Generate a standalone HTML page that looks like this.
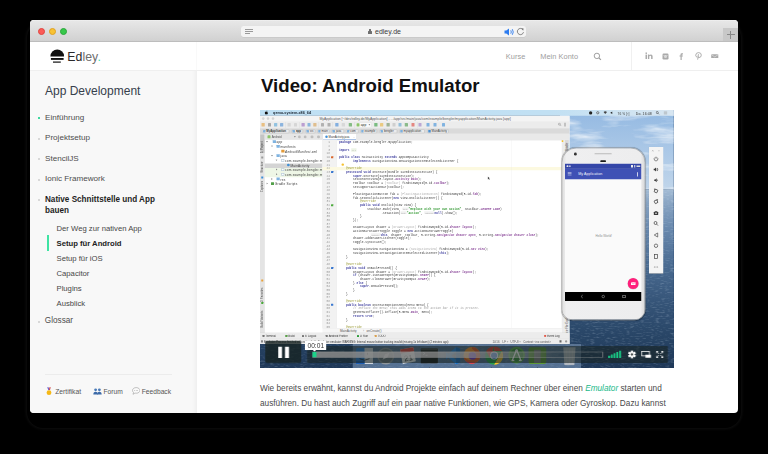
<!DOCTYPE html>
<html><head><meta charset="utf-8">
<style>
*{margin:0;padding:0;box-sizing:border-box}
html,body{width:768px;height:454px;overflow:hidden;background:#000}
body{position:relative;font-family:"Liberation Sans",sans-serif}
.a{position:absolute}
.t{white-space:nowrap;line-height:1}
#shadow{left:27px;top:22px;width:714px;height:406px;border-radius:16px;box-shadow:0 0 3px 1px rgba(255,255,255,0.06)}
#win{left:30px;top:20px;width:708px;height:393.4px;border-radius:4px;overflow:hidden;background:#fff}
#tb{left:0;top:0;width:708px;height:21.6px;background:linear-gradient(#e8e8e8,#d1d1d1);border-bottom:1px solid #bdbdbd;box-shadow:inset 0 0.6px 0 #f4f4f4}
.tl{width:7px;height:7px;border-radius:50%;top:7.6px}
#addr{left:211px;top:5.5px;width:285px;height:11.5px;border-radius:2.5px;background:#f4f4f4;box-shadow:0 0.5px 0.5px rgba(0,0,0,0.10)}
#plus{left:693px;top:8.3px;width:15px;height:13px;background:#c8c8c8}
#hdr{left:0;top:21.6px;width:708px;height:29.2px;background:#fff;border-bottom:1px solid #efefef}
#side{left:0;top:50.8px;width:166.5px;height:343px;background:#f8f8f8;box-shadow:inset -5px 0 5px -4px rgba(0,0,0,0.06)}
.cl{position:absolute;left:0;white-space:pre;font-family:"Liberation Mono",monospace;font-size:11.73px;line-height:1;color:#000}

</style></head>
<body>
<div id="shadow" class="a"></div>
<div id="win" class="a">
<div id="tb" class="a"><div class="a tl" style="left:7.9px;background:#fc5b57;border:0.5px solid #e0443f"></div><div class="a tl" style="left:18.9px;background:#f8c233;border:0.5px solid #dfa123"></div><div class="a tl" style="left:29.9px;background:#37c84a;border:0.5px solid #2aa83a"></div><div id="addr" class="a"><div class="a" style="left:4px;top:3.3px;width:8px;height:1px;background:#9a9a9a"></div><div class="a" style="left:4px;top:5.2px;width:8px;height:1px;background:#9a9a9a"></div><div class="a" style="left:4px;top:7.1px;width:5px;height:1px;background:#9a9a9a"></div></div><div class="a " style="left:338.20px;top:11.00px;width:3.60px;height:3.20px;background:#6f6f6f;border-radius:0.5px"></div>
<div class="a" style="left:338.9px;top:8.600000000000001px;width:2.3px;height:3.2px;border:0.8px solid #6f6f6f;border-bottom:none;border-radius:1.2px 1.2px 0 0"></div><div class="a t" style="left:345.00px;top:8.37px;font-size:7.0px;color:#3c3c3c;font-weight:normal;letter-spacing:0px">edley.de</div>
<svg class="a" style="left:473.5px;top:7.5px" width="12" height="8" viewBox="0 0 12 8"><path d="M0.5 2.5h1.8L5 0.6v6.8L2.3 5.5H0.5z" fill="#2d7cf0"/><path d="M6.8 2.3q1 1.7 0 3.4M8.3 1.2q1.9 2.8 0 5.6" stroke="#2d7cf0" stroke-width="0.9" fill="none"/></svg><svg class="a" style="left:485.5px;top:7.300000000000001px" width="9" height="9" viewBox="0 0 9 9"><path d="M6.9 2.6A3.1 3.1 0 1 0 7.5 5.2" stroke="#707070" stroke-width="0.85" fill="none"/><path d="M5.4 1.2L7.6 1.5 7.2 3.7z" fill="#707070"/></svg><div id="plus" class="a"><div class="a" style="left:3.5px;top:6px;width:8px;height:0.6px;background:#888"></div><div class="a" style="left:7.2px;top:2.3px;width:0.6px;height:8px;background:#888"></div></div></div><div id="hdr" class="a"></div><div class="a " style="left:165.60px;top:22.00px;width:0.70px;height:28.00px;background:#f9f9f9;"></div>
<svg class="a" style="left:20px;top:28.5px" width="14.5" height="14" viewBox="0 0 14.5 14"><path d="M0.4 7.4A6.85 6.85 0 0 1 14.1 7.4z" fill="#111"/><rect x="0.9" y="9.0" width="12.7" height="1.9" fill="#111"/><rect x="3.0" y="12.5" width="7.8" height="1.2" fill="#111"/></svg><div class="a t" style="left:37.30px;top:30.99px;font-size:12.3px;color:#333;font-weight:normal;letter-spacing:0.05px"><span style="color:#2a2a2a">Ed</span><span style="color:#6e6e6e">ley</span><span style="color:#3fe0a5">.</span></div>
<div class="a t" style="left:475.80px;top:32.74px;font-size:7.4px;color:#9d9d9d;font-weight:normal;letter-spacing:0.05px">Kurse</div>
<div class="a t" style="left:510.20px;top:32.74px;font-size:7.4px;color:#9d9d9d;font-weight:normal;letter-spacing:0.05px">Mein Konto</div>
<svg class="a" style="left:563px;top:31.5px" width="9" height="9" viewBox="0 0 9 9"><circle cx="3.9" cy="3.9" r="2.7" stroke="#9a9a9a" stroke-width="0.95" fill="none"/><path d="M5.9 5.9L7.9 7.9" stroke="#9a9a9a" stroke-width="1.1"/></svg><div class="a " style="left:601.20px;top:21.50px;width:0.80px;height:28.00px;background:#f0f0f0;"></div>
<svg class="a" style="left:614.5px;top:32.3px" width="8" height="7.5" viewBox="0 0 8 7.5"><rect x="0.5" y="0.5" width="1.5" height="1.4" fill="#aaaaaa"/><rect x="0.5" y="2.6" width="1.5" height="4.4" fill="#aaaaaa"/><path d="M2.9 2.6h1.4v0.7q0.6-0.9 1.7-0.9 1.6 0 1.6 1.9V7H6.1V4.6q0-0.9-0.8-0.9-1 0-1 1.1V7H2.9z" fill="#aaaaaa"/></svg><svg class="a" style="left:631.5px;top:32.5px" width="7" height="7" viewBox="0 0 7 7"><rect x="0.5" y="0.5" width="6" height="6" rx="1.2" fill="#aaaaaa"/><circle cx="3.5" cy="3.6" r="1.5" fill="#fff" fill-opacity="0.55"/><rect x="0.9" y="2.3" width="5.2" height="0.5" fill="#fff" fill-opacity="0.5"/></svg><svg class="a" style="left:649px;top:32.5px" width="5" height="7" viewBox="0 0 5 7"><path d="M1.5 7V3.6H0.5V2.5h1V1.6Q1.5 0.3 2.8 0.3H4v1.1H3.2q-0.5 0-0.5 0.5v0.6H4L3.8 3.6H2.7V7z" fill="#aaaaaa"/></svg><svg class="a" style="left:664.5px;top:32px" width="7" height="8" viewBox="0 0 7 8"><path d="M2.6 7.6L3.4 4.4M2.3 5.3Q0.6 4.7 0.7 3.2 0.9 0.6 3.6 0.6 6.3 0.7 6.3 3.1 6.2 5.5 4.0 5.6 2.9 5.5 3.0 4.4L3.5 2.2" stroke="#aaaaaa" stroke-width="0.95" fill="none"/></svg><svg class="a" style="left:681px;top:33.6px" width="7.5" height="4.8" viewBox="0 0 7.5 4.8"><rect x="0.2" y="0.2" width="7.1" height="4.4" rx="0.4" fill="#aaaaaa"/><path d="M0.3 0.6L3.75 2.9 7.2 0.6" stroke="#fff" stroke-width="0.6" stroke-opacity="0.8" fill="none"/></svg><div id="side" class="a"></div><div class="a t" style="left:15.00px;top:64.64px;font-size:12.0px;color:#36404c;font-weight:normal;">App Development</div>
<div class="a t" style="left:15.00px;top:93.54px;font-size:8.1px;color:#4d4d4d;font-weight:normal;">Einführung</div>
<div class="a " style="left:8.10px;top:97.10px;width:1.90px;height:1.90px;background:#3fd9a0;"></div>
<div class="a t" style="left:15.00px;top:114.14px;font-size:8.1px;color:#4d4d4d;font-weight:normal;">Projektsetup</div>
<div class="a " style="left:8.10px;top:117.70px;width:1.90px;height:1.90px;background:#d8d8d8;"></div>
<div class="a t" style="left:15.00px;top:134.54px;font-size:8.1px;color:#4d4d4d;font-weight:normal;">StencilJS</div>
<div class="a " style="left:8.10px;top:138.10px;width:1.90px;height:1.90px;background:#d8d8d8;"></div>
<div class="a t" style="left:15.00px;top:155.34px;font-size:8.1px;color:#4d4d4d;font-weight:normal;">Ionic Framework</div>
<div class="a " style="left:8.10px;top:158.90px;width:1.90px;height:1.90px;background:#d8d8d8;"></div>
<div class="a t" style="left:15.00px;top:175.80px;font-size:8.15px;color:#1e1e1e;font-weight:bold;">Native Schnittstelle und App</div>
<div class="a t" style="left:15.00px;top:187.20px;font-size:8.15px;color:#1e1e1e;font-weight:bold;">bauen</div>
<div class="a " style="left:8.10px;top:179.40px;width:1.90px;height:1.90px;background:#d8d8d8;"></div>
<div class="a t" style="left:26.50px;top:205.48px;font-size:7.7px;color:#474747;font-weight:normal;">Der Weg zur nativen App</div>
<div class="a t" style="left:26.50px;top:219.98px;font-size:7.7px;color:#222;font-weight:bold;">Setup für Android</div>
<div class="a t" style="left:26.50px;top:234.68px;font-size:7.7px;color:#474747;font-weight:normal;">Setup für iOS</div>
<div class="a t" style="left:26.50px;top:250.08px;font-size:7.7px;color:#474747;font-weight:normal;">Capacitor</div>
<div class="a t" style="left:26.50px;top:264.88px;font-size:7.7px;color:#474747;font-weight:normal;">Plugins</div>
<div class="a t" style="left:26.50px;top:279.78px;font-size:7.7px;color:#474747;font-weight:normal;">Ausblick</div>
<div class="a " style="left:17.20px;top:215.40px;width:2.20px;height:15.40px;background:#3fe3a3;"></div>
<div class="a t" style="left:14.80px;top:297.06px;font-size:8.2px;color:#4d4d4d;font-weight:normal;">Glossar</div>
<div class="a " style="left:8.10px;top:300.70px;width:1.90px;height:1.90px;background:#d8d8d8;"></div>
<div class="a " style="left:15.00px;top:354.20px;width:126.50px;height:0.70px;background:#ececec;"></div>
<div class="a t" style="left:25.20px;top:368.69px;font-size:6.75px;color:#555;font-weight:normal;">Zertifikat</div>
<div class="a t" style="left:73.50px;top:368.77px;font-size:6.65px;color:#555;font-weight:normal;">Forum</div>
<div class="a t" style="left:111.80px;top:368.75px;font-size:6.67px;color:#555;font-weight:normal;">Feedback</div>
<svg class="a" style="left:16px;top:366.5px" width="6" height="9" viewBox="0 0 6 9"><path d="M1.2 0.3h1.4l0.8 2.4-1 0.6z" fill="#6a5acd"/><path d="M3.4 0.3h1.4L3.9 3.3 2.9 2.7z" fill="#d04a4a"/><circle cx="3" cy="5.7" r="2.4" fill="#f5b816"/></svg><svg class="a" style="left:62.8px;top:367.5px" width="9" height="7" viewBox="0 0 9 7"><circle cx="2.6" cy="1.8" r="1.4" fill="#4a7ab8"/><circle cx="6.4" cy="1.8" r="1.4" fill="#4a7ab8"/><path d="M0.3 6.6q0-2.9 2.3-2.9t2.3 2.9z" fill="#3c6aa8"/><path d="M4.1 6.6q0-2.9 2.3-2.9t2.3 2.9z" fill="#3c6aa8"/></svg><svg class="a" style="left:101.5px;top:367.0px" width="8.5" height="8" viewBox="0 0 8.5 8"><path d="M4.2 0.6C6.3 0.6 7.9 1.8 7.9 3.4S6.3 6.2 4.2 6.2q-0.6 0-1.2-0.2L1 7.3 1.5 5.5Q0.5 4.6 0.5 3.4C0.5 1.8 2.1 0.6 4.2 0.6z" fill="#fafafa" stroke="#9a9a9a" stroke-width="0.6"/><circle cx="2.7" cy="3.4" r="0.45" fill="#888"/><circle cx="4.2" cy="3.4" r="0.45" fill="#888"/><circle cx="5.7" cy="3.4" r="0.45" fill="#888"/></svg><div class="a t" style="left:231.00px;top:57.01px;font-size:18.65px;color:#111;font-weight:bold;">Video: Android Emulator</div>
<div id="video" class="a" style="left:230.0px;top:90.0px;width:413.7px;height:258.3px;overflow:hidden;background:#1f3b5c"><div class="a" style="left:0;top:0;width:1655px;height:1033px;transform:scale(0.25);transform-origin:0 0"><div class="a" style="left:1200.0px;top:0.0px;width:454.8px;height:318.0px;background:linear-gradient(180deg,#93b9e2 0%,#a8c6e6 45%,#c0d5ea 100%);"></div>
<svg class="a" style="left:1200.0px;top:0.0px" width="456" height="320"><filter id="cl" x="0" y="0" width="100%" height="100%"><feTurbulence type="fractalNoise" baseFrequency="0.006 0.03" numOctaves="4" seed="7"/><feColorMatrix type="matrix" values="0 0 0 0 1  0 0 0 0 1  0 0 0 0 1  0 0 0 2.2 -1.05"/></filter><rect width="100%" height="100%" filter="url(#cl)" opacity="0.8"/></svg>
<div class="a" style="left:0.0px;top:318.0px;width:1654.8px;height:715.2px;background:linear-gradient(180deg,#a4bcd5 0%,#87a3c2 8%,#6888ad 22%,#4a6b91 42%,#365579 62%,#284566 82%,#1f3858 100%);"></div>
<svg class="a" style="left:0.0px;top:318.0px" width="1656" height="716"><filter id="sea" x="0" y="0" width="100%" height="100%"><feTurbulence type="fractalNoise" baseFrequency="0.05 0.2" numOctaves="2" seed="4"/><feColorMatrix type="matrix" values="0 0 0 0 0.75  0 0 0 0 0.85  0 0 0 0 0.95  0 0 0 2.5 -1.25"/></filter><rect width="100%" height="100%" filter="url(#sea)" opacity="0.22"/></svg>
<div class="a" style="left:0.0px;top:0.0px;width:1654.8px;height:22.8px;background:linear-gradient(90deg,#bfe0f4 0%,#c1e0f3 70%,#d8e6f1 100%);"></div>
<svg class="a" style="left:18.4px;top:1.2px" width="16" height="18" viewBox="0 0 16 18"><path d="M11 1q0 2-2 3.2Q8 4.6 7.6 4.3 7.7 2 10.9 1zM13.6 12.6q-0.8 2-2 3.4-0.9 1-1.8 1-0.7 0-1.6-0.4-0.8-0.4-1.6 0-1 0.4-1.6 0.4-1 0-2-1.3Q1 13.2 1 10.3q0-2.6 1.5-3.9 1-0.9 2.4-0.9 0.8 0 1.8 0.4 0.7 0.3 1 0.3 0.3 0 1.2-0.4 1-0.4 1.8-0.3 2 0.2 3 1.6-1.8 1.1-1.7 3.1 0.1 1.6 1.6 2.4z" fill="#111"/></svg>
<div class="a t" style="left:52.4px;top:1.7px;font-size:15px;color:#1a2430;font-weight:bold;letter-spacing:0px">qemu-system-x86_64</div>
<div class="a" style="left:1316.4px;top:4.8px;width:12.8px;height:12.8px;border-radius:50%;background:#222;"></div>
<div class="a" style="left:1345.2px;top:5.2px;width:12.0px;height:12.0px;border-radius:50%;background:none;border:3px solid #555;box-sizing:border-box"></div>
<svg class="a" style="left:1373.2px;top:4.0px" width="16" height="13" viewBox="0 0 16 13"><path d="M8 12L1 4Q8 -1.5 15 4z" fill="#444"/></svg>
<svg class="a" style="left:1401.2px;top:4.8px" width="12" height="12" viewBox="0 0 12 12"><path d="M1 4h3l4-3.5v11L4 8H1z" fill="#222"/></svg>
<div class="a t" style="left:1430.0px;top:7.4px;font-size:13px;color:#444;font-weight:normal;letter-spacing:0.3px">76 % [<b>▪</b>]</div>
<div class="a t" style="left:1503.2px;top:6.5px;font-size:14px;color:#333;font-weight:normal;letter-spacing:0.4px">Do. 16:48</div>
<svg class="a" style="left:1583.2px;top:4.0px" width="16" height="16" viewBox="0 0 16 16"><circle cx="6" cy="6" r="4.2" stroke="#333" stroke-width="2" fill="none"/><path d="M9 9l4.5 4.5" stroke="#333" stroke-width="2.2"/></svg>
<svg class="a" style="left:1614.4px;top:4.8px" width="16" height="14" viewBox="0 0 16 14"><path d="M1 2h14M1 6.5h14M1 11h14" stroke="#999" stroke-width="2"/></svg>
<div class="a" style="left:0.0px;top:22.8px;width:1238.4px;height:913.2px;background:#ffffff;"></div>
<div class="a" style="left:0.0px;top:22.8px;width:1238.4px;height:22.0px;background:#f4f4f4;"></div>
<div class="a" style="left:7.8px;top:29.0px;width:10.0px;height:10.0px;border-radius:50%;background:#d6d6d6;border:1px solid #c4c4c4;box-sizing:border-box"></div>
<div class="a" style="left:27.4px;top:29.0px;width:10.0px;height:10.0px;border-radius:50%;background:#d6d6d6;border:1px solid #c4c4c4;box-sizing:border-box"></div>
<div class="a" style="left:47.4px;top:29.0px;width:10.0px;height:10.0px;border-radius:50%;background:#d6d6d6;border:1px solid #c4c4c4;box-sizing:border-box"></div>
<div class="a t" style="left:238.0px;top:28.5px;font-size:13.6px;color:#555;font-weight:normal;letter-spacing:0px">MyApplication [~/dev/edley.de/MyApplication] - .../app/src/main/java/com/example/bengler/myapplication/MainActivity.java [app]</div>
<div class="a" style="left:0.0px;top:44.8px;width:1238.4px;height:28.0px;background:#ececec;"></div>
<div class="a" style="left:6.4px;top:52.0px;width:12.8px;height:13.6px;background:#e6a23c;border-radius:2px;opacity:0.6"></div>
<div class="a" style="left:31.6px;top:52.0px;width:12.8px;height:13.6px;background:#7c7c7c;border-radius:2px;opacity:0.6"></div>
<div class="a" style="left:56.0px;top:52.0px;width:12.8px;height:13.6px;background:#55a7d8;border-radius:2px;opacity:0.6"></div>
<div class="a" style="left:80.4px;top:52.0px;width:12.8px;height:13.6px;background:#4c8fd6;border-radius:2px;opacity:0.6"></div>
<div class="a" style="left:110.4px;top:52.0px;width:12.8px;height:13.6px;background:#c8c8c8;border-radius:2px;opacity:0.6"></div>
<div class="a" style="left:135.6px;top:52.0px;width:12.8px;height:13.6px;background:#c8c8c8;border-radius:2px;opacity:0.6"></div>
<div class="a" style="left:166.4px;top:52.0px;width:12.8px;height:13.6px;background:#9b6bbf;border-radius:2px;opacity:0.6"></div>
<div class="a" style="left:189.6px;top:52.0px;width:12.8px;height:13.6px;background:#4b95d6;border-radius:2px;opacity:0.6"></div>
<div class="a" style="left:213.2px;top:52.0px;width:12.8px;height:13.6px;background:#d9a050;border-radius:2px;opacity:0.6"></div>
<div class="a" style="left:243.6px;top:52.0px;width:12.8px;height:13.6px;background:#8a8a8a;border-radius:2px;opacity:0.6"></div>
<div class="a" style="left:269.6px;top:52.0px;width:12.8px;height:13.6px;background:#8a8a8a;border-radius:2px;opacity:0.6"></div>
<div class="a" style="left:300.8px;top:52.0px;width:12.8px;height:13.6px;background:#3d87d8;border-radius:2px;opacity:0.6"></div>
<div class="a" style="left:326.8px;top:52.0px;width:12.8px;height:13.6px;background:#cccccc;border-radius:2px;opacity:0.6"></div>
<div class="a" style="left:355.2px;top:52.0px;width:12.8px;height:13.6px;background:#3f9d3f;border-radius:2px;opacity:0.6"></div>
<div class="a" style="left:456.8px;top:52.0px;width:12.8px;height:13.6px;background:#2e9c3a;border-radius:2px;opacity:0.6"></div>
<div class="a" style="left:480.4px;top:52.0px;width:12.8px;height:13.6px;background:#e9b43a;border-radius:2px;opacity:0.6"></div>
<div class="a" style="left:506.4px;top:52.0px;width:12.8px;height:13.6px;background:#6b8e5b;border-radius:2px;opacity:0.6"></div>
<div class="a" style="left:529.6px;top:52.0px;width:12.8px;height:13.6px;background:#bcbcbc;border-radius:2px;opacity:0.6"></div>
<div class="a" style="left:553.6px;top:52.0px;width:12.8px;height:13.6px;background:#5aa2d0;border-radius:2px;opacity:0.6"></div>
<div class="a" style="left:579.2px;top:52.0px;width:12.8px;height:13.6px;background:#4a9a4a;border-radius:2px;opacity:0.6"></div>
<div class="a" style="left:605.6px;top:52.0px;width:12.8px;height:13.6px;background:#e0443a;border-radius:2px;opacity:0.6"></div>
<div class="a" style="left:633.6px;top:52.0px;width:12.8px;height:13.6px;background:#9a7cc4;border-radius:2px;opacity:0.6"></div>
<div class="a" style="left:665.6px;top:52.0px;width:12.8px;height:13.6px;background:#3b8ed8;border-radius:2px;opacity:0.6"></div>
<div class="a" style="left:693.6px;top:52.0px;width:12.8px;height:13.6px;background:#3b8ed8;border-radius:2px;opacity:0.6"></div>
<div class="a" style="left:727.6px;top:52.0px;width:12.8px;height:13.6px;background:#3b8ed8;border-radius:2px;opacity:0.6"></div>
<div class="a" style="left:101.2px;top:48.0px;width:1.2px;height:24.0px;background:#d0d0d0;"></div>
<div class="a" style="left:157.6px;top:48.0px;width:1.2px;height:24.0px;background:#d0d0d0;"></div>
<div class="a" style="left:234.0px;top:48.0px;width:1.2px;height:24.0px;background:#d0d0d0;"></div>
<div class="a" style="left:290.0px;top:48.0px;width:1.2px;height:24.0px;background:#d0d0d0;"></div>
<div class="a" style="left:376.0px;top:48.0px;width:1.2px;height:24.0px;background:#d0d0d0;"></div>
<div class="a" style="left:628.0px;top:48.0px;width:1.2px;height:24.0px;background:#d0d0d0;"></div>
<div class="a" style="left:380.8px;top:48.8px;width:64.4px;height:21.6px;background:#fafafa;border:1px solid #cfcfcf;border-radius:4px"></div>
<div class="a" style="left:386.4px;top:53.2px;width:11.2px;height:12.8px;background:#8cc46a;border-radius:2px"></div>
<div class="a t" style="left:403.2px;top:54.2px;font-size:13px;color:#222;font-weight:normal;">app</div>
<svg class="a" style="left:433.2px;top:55.6px" width="9" height="7" viewBox="0 0 9 7"><path d="M1 1h7L4.5 6z" fill="#666"/></svg>
<div class="a" style="left:0.0px;top:72.8px;width:1238.4px;height:22.4px;background:#dadada;"></div>
<div class="a" style="left:0.0px;top:94.4px;width:1238.4px;height:0.8px;background:#cfcfcf;"></div>
<div class="a" style="left:8.0px;top:76.8px;width:108.8px;height:16.4px;background:#ececec;border:2.5px solid #bdbdbd;border-radius:4px"></div>
<div class="a" style="left:12.0px;top:80.0px;width:9.6px;height:9.6px;background:#7fb0dc;border-radius:1px"></div>
<div class="a t" style="left:25.2px;top:79.5px;font-size:11.5px;color:#333;font-weight:bold;">MyApplication</div>
<div class="a" style="left:126.4px;top:76.8px;width:45.6px;height:16.4px;background:#ececec;border:2.5px solid #bdbdbd;border-radius:4px"></div>
<div class="a" style="left:130.4px;top:80.0px;width:9.6px;height:9.6px;background:#7fb0dc;border-radius:1px"></div>
<div class="a t" style="left:143.6px;top:79.5px;font-size:11.5px;color:#333;font-weight:bold;">app</div>
<div class="a" style="left:182.0px;top:76.8px;width:39.2px;height:16.4px;background:#ececec;border:2.5px solid #bdbdbd;border-radius:4px"></div>
<div class="a" style="left:186.0px;top:80.0px;width:9.6px;height:9.6px;background:#7fb0dc;border-radius:1px"></div>
<div class="a t" style="left:199.2px;top:79.5px;font-size:11.5px;color:#333;font-weight:normal;">src</div>
<div class="a" style="left:228.8px;top:76.8px;width:49.6px;height:16.4px;background:#ececec;border:2.5px solid #bdbdbd;border-radius:4px"></div>
<div class="a" style="left:232.8px;top:80.0px;width:9.6px;height:9.6px;background:#7fb0dc;border-radius:1px"></div>
<div class="a t" style="left:246.0px;top:79.5px;font-size:11.5px;color:#333;font-weight:normal;">main</div>
<div class="a" style="left:286.4px;top:76.8px;width:49.6px;height:16.4px;background:#ececec;border:2.5px solid #bdbdbd;border-radius:4px"></div>
<div class="a" style="left:290.4px;top:80.0px;width:9.6px;height:9.6px;background:#7fb0dc;border-radius:1px"></div>
<div class="a t" style="left:303.6px;top:79.5px;font-size:11.5px;color:#333;font-weight:normal;">java</div>
<div class="a" style="left:343.6px;top:76.8px;width:50.4px;height:16.4px;background:#ececec;border:2.5px solid #bdbdbd;border-radius:4px"></div>
<div class="a" style="left:347.6px;top:80.0px;width:9.6px;height:9.6px;background:#7fb0dc;border-radius:1px"></div>
<div class="a t" style="left:360.8px;top:79.5px;font-size:11.5px;color:#333;font-weight:normal;">com</div>
<div class="a" style="left:400.8px;top:76.8px;width:67.6px;height:16.4px;background:#ececec;border:2.5px solid #bdbdbd;border-radius:4px"></div>
<div class="a" style="left:404.8px;top:80.0px;width:9.6px;height:9.6px;background:#7fb0dc;border-radius:1px"></div>
<div class="a t" style="left:418.0px;top:79.5px;font-size:11.5px;color:#333;font-weight:normal;">example</div>
<div class="a" style="left:478.8px;top:76.8px;width:70.4px;height:16.4px;background:#ececec;border:2.5px solid #bdbdbd;border-radius:4px"></div>
<div class="a" style="left:482.8px;top:80.0px;width:9.6px;height:9.6px;background:#7fb0dc;border-radius:1px"></div>
<div class="a t" style="left:496.0px;top:79.5px;font-size:11.5px;color:#333;font-weight:normal;">bengler</div>
<div class="a" style="left:557.2px;top:76.8px;width:101.6px;height:16.4px;background:#ececec;border:2.5px solid #bdbdbd;border-radius:4px"></div>
<div class="a" style="left:561.2px;top:80.0px;width:9.6px;height:9.6px;background:#7fb0dc;border-radius:1px"></div>
<div class="a t" style="left:574.4px;top:79.5px;font-size:11.5px;color:#333;font-weight:normal;">myapplication</div>
<div class="a" style="left:669.2px;top:76.8px;width:86.0px;height:16.4px;background:#ececec;border:2.5px solid #bdbdbd;border-radius:4px"></div>
<div class="a" style="left:673.2px;top:80.0px;width:9.6px;height:9.6px;background:#4a90d0;border-radius:1px"></div>
<div class="a t" style="left:686.4px;top:79.5px;font-size:11.5px;color:#333;font-weight:normal;">MainActivity</div>
<div class="a" style="left:0.0px;top:95.2px;width:18.4px;height:820.8px;background:#e4e4e4;"></div>
<div class="a" style="left:17.6px;top:95.2px;width:1.2px;height:820.8px;background:#cccccc;"></div>
<div class="a" style="left:0.8px;top:98.0px;width:16.8px;height:74.0px;background:#c4c4c4;"></div>
<div class="a" style="left:5.2px;top:186.0px;width:8.0px;height:8.0px;background:#999;border-radius:1px"></div>
<div class="a" style="left:5.2px;top:266.0px;width:8.0px;height:8.0px;background:#3b8ed8;border-radius:1px"></div>
<div class="a" style="left:5.2px;top:678.0px;width:8.0px;height:8.0px;background:#e9a23a;border-radius:1px"></div>
<div class="a" style="left:5.2px;top:768.0px;width:8.0px;height:8.0px;background:#4caa3c;border-radius:1px"></div>
<div class="a t" style="left:2.4px;top:172.0px;font-size:11px;color:#444;transform:rotate(-90deg);transform-origin:0 0">1: Project</div>
<div class="a t" style="left:2.4px;top:251.0px;font-size:11px;color:#444;transform:rotate(-90deg);transform-origin:0 0">Structure</div>
<div class="a t" style="left:2.4px;top:328.0px;font-size:11px;color:#444;transform:rotate(-90deg);transform-origin:0 0">Captures</div>
<div class="a t" style="left:2.4px;top:768.0px;font-size:11px;color:#444;transform:rotate(-90deg);transform-origin:0 0">2: Favorites</div>
<div class="a t" style="left:2.4px;top:870.0px;font-size:11px;color:#444;transform:rotate(-90deg);transform-origin:0 0">Build Variants</div>
<div class="a" style="left:18.8px;top:95.2px;width:230.8px;height:23.2px;background:#e6e6e6;"></div>
<div class="a" style="left:18.8px;top:117.6px;width:230.8px;height:0.8px;background:#cfcfcf;"></div>
<div class="a" style="left:30.4px;top:101.2px;width:11.2px;height:11.6px;background:#8cc46a;border-radius:3px 3px 1px 1px"></div>
<div class="a t" style="left:46.8px;top:103.5px;font-size:11.5px;color:#555;font-weight:normal;">Android</div>
<svg class="a" style="left:135.2px;top:104.0px" width="9" height="7" viewBox="0 0 9 7"><path d="M1 1h7L4.5 6z" fill="#666"/></svg>
<div class="a" style="left:152.0px;top:101.6px;width:11.2px;height:11.2px;border-radius:50%;background:#bdbdbd;"></div>
<div class="a" style="left:174.8px;top:101.6px;width:11.2px;height:11.2px;border-radius:50%;background:#bdbdbd;"></div>
<div class="a" style="left:202.4px;top:101.6px;width:11.2px;height:11.2px;border-radius:50%;background:#bdbdbd;"></div>
<div class="a" style="left:228.4px;top:101.6px;width:11.2px;height:11.2px;border-radius:50%;background:#bdbdbd;"></div>
<div class="a" style="left:18.8px;top:213.6px;width:230.0px;height:18.4px;background:#d4d4d4;"></div>
<div class="a" style="left:18.8px;top:232.0px;width:230.0px;height:37.2px;background:#eef6e6;"></div>
<div class="a" style="left:18.8px;top:118.4px;width:230.0px;height:753.6px;overflow:hidden"><div class="a" style="left:-18.8px;top:-118.4px;width:1655px;height:1033px">
<svg class="a" style="left:23.2px;top:122.8px" width="10" height="8" viewBox="0 0 10 8"><path d="M1 1h8L5 7z" fill="#8a8a8a"/></svg>
<div class="a" style="left:50.8px;top:121.2px;width:12.8px;height:11.2px;background:#7fb3e0;border-radius:1px"></div>
<div class="a t" style="left:66.4px;top:122.6px;font-size:12.5px;color:#3a3a3a;font-weight:normal;letter-spacing:0.8px">app</div>
<svg class="a" style="left:42.8px;top:141.4px" width="10" height="8" viewBox="0 0 10 8"><path d="M1 1h8L5 7z" fill="#8a8a8a"/></svg>
<div class="a" style="left:66.4px;top:139.8px;width:12.8px;height:11.2px;background:#7fb3e0;border-radius:1px"></div>
<div class="a t" style="left:82.0px;top:141.3px;font-size:12.5px;color:#3a3a3a;font-weight:normal;letter-spacing:0.8px">manifests</div>
<div class="a" style="left:84.8px;top:158.5px;width:12.8px;height:11.2px;background:#e39b3a;border-radius:1px"></div>
<div class="a t" style="left:100.4px;top:159.9px;font-size:12.5px;color:#3a3a3a;font-weight:normal;font-style:italic;letter-spacing:0.8px">AndroidManifest.xml</div>
<svg class="a" style="left:42.8px;top:178.7px" width="10" height="8" viewBox="0 0 10 8"><path d="M1 1h8L5 7z" fill="#8a8a8a"/></svg>
<div class="a" style="left:66.4px;top:177.1px;width:12.8px;height:11.2px;background:#7fb3e0;border-radius:1px"></div>
<div class="a t" style="left:82.0px;top:178.5px;font-size:12.5px;color:#3a3a3a;font-weight:normal;letter-spacing:0.8px">java</div>
<svg class="a" style="left:61.2px;top:197.4px" width="10" height="8" viewBox="0 0 10 8"><path d="M1 1h8L5 7z" fill="#8a8a8a"/></svg>
<div class="a" style="left:85.2px;top:196.2px;width:12.0px;height:10.4px;background:#fff;border:2px solid #9fb8cf;border-radius:1px"></div>
<div class="a t" style="left:100.4px;top:197.2px;font-size:12.5px;color:#3a3a3a;font-weight:normal;letter-spacing:0.8px">com.example.bengler.myapplication</div>
<div class="a" style="left:107.8px;top:214.6px;width:10.8px;height:10.8px;border-radius:50%;background:#3f8fd6;"></div>
<div class="a t" style="left:122.0px;top:215.8px;font-size:12.5px;color:#3a3a3a;font-weight:normal;letter-spacing:0.8px">MainActivity</div>
<svg class="a" style="left:62.8px;top:233.4px" width="8" height="10" viewBox="0 0 8 10"><path d="M1 1v8l6-4z" fill="#8a8a8a"/></svg>
<div class="a" style="left:85.2px;top:233.4px;width:12.0px;height:10.4px;background:#fff;border:2px solid #9fb8cf;border-radius:1px"></div>
<div class="a t" style="left:100.4px;top:234.5px;font-size:12.5px;color:#3a3a3a;font-weight:normal;letter-spacing:0.8px">com.example.bengler.myapplication (androidTest)</div>
<svg class="a" style="left:62.8px;top:252.1px" width="8" height="10" viewBox="0 0 8 10"><path d="M1 1v8l6-4z" fill="#8a8a8a"/></svg>
<div class="a" style="left:85.2px;top:252.1px;width:12.0px;height:10.4px;background:#fff;border:2px solid #9fb8cf;border-radius:1px"></div>
<div class="a t" style="left:100.4px;top:253.1px;font-size:12.5px;color:#3a3a3a;font-weight:normal;letter-spacing:0.8px">com.example.bengler.myapplication (test)</div>
<svg class="a" style="left:44.4px;top:270.7px" width="8" height="10" viewBox="0 0 8 10"><path d="M1 1v8l6-4z" fill="#8a8a8a"/></svg>
<div class="a" style="left:66.4px;top:270.3px;width:12.8px;height:11.2px;background:#7fb3e0;border-radius:1px"></div>
<div class="a t" style="left:82.0px;top:271.7px;font-size:12.5px;color:#3a3a3a;font-weight:normal;letter-spacing:0.8px">res</div>
<svg class="a" style="left:24.8px;top:289.4px" width="8" height="10" viewBox="0 0 8 10"><path d="M1 1v8l6-4z" fill="#8a8a8a"/></svg>
<div class="a" style="left:43.6px;top:289.0px;width:12.8px;height:11.2px;background:#52a04a;border-radius:1px"></div>
<div class="a t" style="left:59.2px;top:290.4px;font-size:12.5px;color:#3a3a3a;font-weight:normal;letter-spacing:0.8px">Gradle Scripts</div>
</div></div>
<div class="a" style="left:249.6px;top:95.2px;width:988.8px;height:25.6px;background:#e9e9e9;"></div>
<div class="a" style="left:249.6px;top:120.0px;width:988.8px;height:0.8px;background:#d8d8d8;"></div>
<div class="a" style="left:251.6px;top:96.0px;width:132.4px;height:22.0px;background:#ffffff;"></div>
<div class="a" style="left:251.6px;top:116.4px;width:132.4px;height:1.6px;background:#5a8fd8;"></div>
<div class="a" style="left:260.6px;top:102.2px;width:10.0px;height:10.0px;border-radius:50%;background:#3f8fd6;"></div>
<div class="a t" style="left:274.4px;top:103.2px;font-size:11.3px;color:#333;font-weight:normal;">MainActivity.java</div>
<div class="a t" style="left:372.8px;top:103.5px;font-size:10px;color:#aaa;font-weight:normal;">×</div>
<svg class="a" style="left:1191.2px;top:50.4px" width="16" height="16" viewBox="0 0 16 16"><circle cx="6.5" cy="6.5" r="4" stroke="#777" stroke-width="1.6" fill="none"/><path d="M9.5 9.5l4 4" stroke="#777" stroke-width="1.8"/></svg>
<div class="a" style="left:1216.0px;top:51.2px;width:1.6px;height:14.4px;background:#999;"></div>
<div class="a" style="left:1222.4px;top:51.2px;width:1.6px;height:14.4px;background:#999;"></div>
<div class="a" style="left:248.8px;top:95.2px;width:1.2px;height:777.6px;background:#cfcfcf;"></div>
<div class="a" style="left:250.0px;top:118.4px;width:58.0px;height:753.6px;background:#f2f2f2;"></div>
<div class="a" style="left:307.2px;top:118.4px;width:0.8px;height:753.6px;background:#e8e8e8;"></div>
<div class="a" style="left:308.0px;top:227.9px;width:900.0px;height:13.2px;background:#fcf9e0;"></div>
<div class="a" style="left:250.0px;top:227.9px;width:58.0px;height:13.2px;background:#fcf9e0;"></div>
<div class="a" style="left:1004.0px;top:118.4px;width:1.0px;height:753.6px;background:#e6e6e6;"></div>
<div class="a" style="left:1208.0px;top:118.4px;width:30.4px;height:817.6px;background:#ececec;"></div>
<div class="a" style="left:1207.2px;top:118.4px;width:0.8px;height:817.6px;background:#d3d3d3;"></div>
<div class="a" style="left:1206.4px;top:120.8px;width:6.4px;height:6.8px;background:#f2c02c;"></div>
<div class="a" style="left:1220.0px;top:120.0px;width:15.2px;height:52.0px;background:#dadada;"></div>
<div class="a t" style="left:1220.8px;top:164.0px;font-size:11px;color:#444;transform:rotate(-90deg);transform-origin:0 0">Gradle</div>
<div class="a t" style="left:1220.8px;top:912.0px;font-size:11px;color:#444;transform:rotate(-90deg);transform-origin:0 0">Device File Explorer</div>
<div class="a" style="left:316.0px;top:0;width:892.0px;height:872.0px;overflow:hidden;opacity:0.8"><div class="cl" style="top:125.1px"><span style="font-weight:bold;color:#000080">package</span> com.example.bengler.myapplication;</div><div class="cl" style="top:139.8px"></div><div class="cl" style="top:154.6px"><span style="font-weight:bold;color:#000080">import</span> <span style="background:#e8f0e0;color:#555">...</span></div><div class="cl" style="top:169.4px"></div><div class="cl" style="top:184.1px"><span style="font-weight:bold;color:#000080">public class</span> MainActivity <span style="font-weight:bold;color:#000080">extends</span> AppCompatActivity</div><div class="cl" style="top:198.9px">        <span style="font-weight:bold;color:#000080">implements</span> NavigationView.OnNavigationItemSelectedListener {</div><div class="cl" style="top:213.6px"></div><div class="cl" style="top:228.4px">    <span style="color:#808000">@Override</span></div><div class="cl" style="top:243.2px">    <span style="font-weight:bold;color:#000080">protected void</span> onCreate(Bundle savedInstanceState) {</div><div class="cl" style="top:257.9px">        <span style="font-weight:bold;color:#000080">super</span>.onCreate(savedInstanceState);</div><div class="cl" style="top:272.7px">        setContentView(R.layout.<span style="color:#660e7a;font-weight:bold;font-style:italic">activity_main</span>);</div><div class="cl" style="top:287.4px">        Toolbar toolbar = <span style="color:#999">(Toolbar)</span> findViewById(R.id.<span style="color:#660e7a;font-weight:bold;font-style:italic">toolbar</span>);</div><div class="cl" style="top:302.2px">        setSupportActionBar(toolbar);</div><div class="cl" style="top:317.0px"></div><div class="cl" style="top:331.7px">        FloatingActionButton fab = <span style="color:#999">(FloatingActionButton)</span> findViewById(R.id.<span style="color:#660e7a;font-weight:bold;font-style:italic">fab</span>);</div><div class="cl" style="top:346.5px">        fab.setOnClickListener(<span style="font-weight:bold;color:#000080">new</span> View.OnClickListener() {</div><div class="cl" style="top:361.2px">            <span style="color:#808000">@Override</span></div><div class="cl" style="top:376.0px">            <span style="font-weight:bold;color:#000080">public void</span> onClick(View view) {</div><div class="cl" style="top:390.8px">                Snackbar.<span style="font-style:italic">make</span>(view, <span style="font-family:Liberation Sans;font-size:10px;color:#9a9a9a;background:#eeeeee;padding:0 3px;margin:0;border-radius:2px">text:</span><span style="color:#008000;font-weight:bold">&quot;Replace with your own action&quot;</span>, Snackbar.<span style="color:#660e7a;font-weight:bold;font-style:italic">LENGTH_LONG</span>)</div><div class="cl" style="top:405.5px">                        .setAction(<span style="font-family:Liberation Sans;font-size:10px;color:#9a9a9a;background:#eeeeee;padding:0 3px;margin:0;border-radius:2px">text:</span><span style="color:#008000;font-weight:bold">&quot;Action&quot;</span>, <span style="font-family:Liberation Sans;font-size:10px;color:#9a9a9a;background:#eeeeee;padding:0 3px;margin:0;border-radius:2px">listener:</span><span style="font-weight:bold;color:#000080">null</span>).show();</div><div class="cl" style="top:420.3px">            }</div><div class="cl" style="top:435.0px">        });</div><div class="cl" style="top:449.8px"></div><div class="cl" style="top:464.6px">        DrawerLayout drawer = <span style="color:#999">(DrawerLayout)</span> findViewById(R.id.<span style="color:#660e7a;font-weight:bold;font-style:italic">drawer_layout</span>);</div><div class="cl" style="top:479.3px">        ActionBarDrawerToggle toggle = <span style="font-weight:bold;color:#000080">new</span> ActionBarDrawerToggle(</div><div class="cl" style="top:494.1px">                  <span style="font-family:Liberation Sans;font-size:10px;color:#9a9a9a;background:#eeeeee;padding:0 3px;margin:0;border-radius:2px">activity:</span><span style="font-weight:bold;color:#000080">this</span>, drawer, toolbar, R.string.<span style="color:#660e7a;font-weight:bold;font-style:italic">navigation_drawer_open</span>, R.string.<span style="color:#660e7a;font-weight:bold;font-style:italic">navigation_drawer_close</span>);</div><div class="cl" style="top:508.8px">        drawer.addDrawerListener(toggle);</div><div class="cl" style="top:523.6px">        toggle.syncState();</div><div class="cl" style="top:538.4px"></div><div class="cl" style="top:553.1px">        NavigationView navigationView = <span style="color:#999">(NavigationView)</span> findViewById(R.id.<span style="color:#660e7a;font-weight:bold;font-style:italic">nav_view</span>);</div><div class="cl" style="top:567.9px">        navigationView.setNavigationItemSelectedListener(<span style="font-weight:bold;color:#000080">this</span>);</div><div class="cl" style="top:582.6px">    }</div><div class="cl" style="top:597.4px"></div><div class="cl" style="top:612.2px">    <span style="color:#808000">@Override</span></div><div class="cl" style="top:626.9px">    <span style="font-weight:bold;color:#000080">public void</span> onBackPressed() {</div><div class="cl" style="top:641.7px">        DrawerLayout drawer = <span style="color:#999">(DrawerLayout)</span> findViewById(R.id.<span style="color:#660e7a;font-weight:bold;font-style:italic">drawer_layout</span>);</div><div class="cl" style="top:656.4px">        <span style="font-weight:bold;color:#000080">if</span> (drawer.isDrawerOpen(GravityCompat.<span style="color:#660e7a;font-weight:bold;font-style:italic">START</span>)) {</div><div class="cl" style="top:671.2px">            drawer.closeDrawer(GravityCompat.<span style="color:#660e7a;font-weight:bold;font-style:italic">START</span>);</div><div class="cl" style="top:686.0px">        } <span style="font-weight:bold;color:#000080">else</span> {</div><div class="cl" style="top:700.7px">            <span style="font-weight:bold;color:#000080">super</span>.onBackPressed();</div><div class="cl" style="top:715.5px">        }</div><div class="cl" style="top:730.2px">    }</div><div class="cl" style="top:745.0px"></div><div class="cl" style="top:759.8px">    <span style="color:#808000">@Override</span></div><div class="cl" style="top:774.5px">    <span style="font-weight:bold;color:#000080">public boolean</span> onCreateOptionsMenu(Menu menu) {</div><div class="cl" style="top:789.3px">        <span style="color:#808080;font-style:italic">// Inflate the menu; this adds items to the action bar if it is present.</span></div><div class="cl" style="top:804.0px">        getMenuInflater().inflate(R.menu.<span style="color:#660e7a;font-weight:bold;font-style:italic">main</span>, menu);</div><div class="cl" style="top:818.8px">        <span style="font-weight:bold;color:#000080">return true</span>;</div><div class="cl" style="top:833.6px">    }</div><div class="cl" style="top:848.3px"></div><div class="cl" style="top:863.1px">    <span style="color:#808000">@Override</span></div></div>
<div class="a" style="left:240.0px;top:0;width:60px;height:872.0px;overflow:hidden"><div class="cl" style="top:125.1px;width:40px;text-align:right;color:#999">1</div><div class="cl" style="top:139.8px;width:40px;text-align:right;color:#999">2</div><div class="cl" style="top:154.6px;width:40px;text-align:right;color:#999">3</div><div class="cl" style="top:169.4px;width:40px;text-align:right;color:#999">18</div><div class="cl" style="top:184.1px;width:40px;text-align:right;color:#999">19</div><div class="cl" style="top:198.9px;width:40px;text-align:right;color:#999">20</div><div class="cl" style="top:213.6px;width:40px;text-align:right;color:#999">21</div><div class="cl" style="top:228.4px;width:40px;text-align:right;color:#999">22</div><div class="cl" style="top:243.2px;width:40px;text-align:right;color:#999">23</div><div class="cl" style="top:257.9px;width:40px;text-align:right;color:#999">24</div><div class="cl" style="top:272.7px;width:40px;text-align:right;color:#999">25</div><div class="cl" style="top:287.4px;width:40px;text-align:right;color:#999">26</div><div class="cl" style="top:302.2px;width:40px;text-align:right;color:#999">27</div><div class="cl" style="top:317.0px;width:40px;text-align:right;color:#999">28</div><div class="cl" style="top:331.7px;width:40px;text-align:right;color:#999">29</div><div class="cl" style="top:346.5px;width:40px;text-align:right;color:#999">30</div><div class="cl" style="top:361.2px;width:40px;text-align:right;color:#999">31</div><div class="cl" style="top:376.0px;width:40px;text-align:right;color:#999">32</div><div class="cl" style="top:390.8px;width:40px;text-align:right;color:#999">33</div><div class="cl" style="top:405.5px;width:40px;text-align:right;color:#999">34</div><div class="cl" style="top:420.3px;width:40px;text-align:right;color:#999">35</div><div class="cl" style="top:435.0px;width:40px;text-align:right;color:#999">36</div><div class="cl" style="top:449.8px;width:40px;text-align:right;color:#999">37</div><div class="cl" style="top:464.6px;width:40px;text-align:right;color:#999">38</div><div class="cl" style="top:479.3px;width:40px;text-align:right;color:#999">39</div><div class="cl" style="top:494.1px;width:40px;text-align:right;color:#999">40</div><div class="cl" style="top:508.8px;width:40px;text-align:right;color:#999">41</div><div class="cl" style="top:523.6px;width:40px;text-align:right;color:#999">42</div><div class="cl" style="top:538.4px;width:40px;text-align:right;color:#999">43</div><div class="cl" style="top:553.1px;width:40px;text-align:right;color:#999">44</div><div class="cl" style="top:567.9px;width:40px;text-align:right;color:#999">45</div><div class="cl" style="top:582.6px;width:40px;text-align:right;color:#999">46</div><div class="cl" style="top:597.4px;width:40px;text-align:right;color:#999">47</div><div class="cl" style="top:612.2px;width:40px;text-align:right;color:#999">48</div><div class="cl" style="top:626.9px;width:40px;text-align:right;color:#999">49</div><div class="cl" style="top:641.7px;width:40px;text-align:right;color:#999">50</div><div class="cl" style="top:656.4px;width:40px;text-align:right;color:#999">51</div><div class="cl" style="top:671.2px;width:40px;text-align:right;color:#999">52</div><div class="cl" style="top:686.0px;width:40px;text-align:right;color:#999">53</div><div class="cl" style="top:700.7px;width:40px;text-align:right;color:#999">54</div><div class="cl" style="top:715.5px;width:40px;text-align:right;color:#999">55</div><div class="cl" style="top:730.2px;width:40px;text-align:right;color:#999">56</div><div class="cl" style="top:745.0px;width:40px;text-align:right;color:#999">57</div><div class="cl" style="top:759.8px;width:40px;text-align:right;color:#999">58</div><div class="cl" style="top:774.5px;width:40px;text-align:right;color:#999">59</div><div class="cl" style="top:789.3px;width:40px;text-align:right;color:#999">60</div><div class="cl" style="top:804.0px;width:40px;text-align:right;color:#999">61</div><div class="cl" style="top:818.8px;width:40px;text-align:right;color:#999">62</div><div class="cl" style="top:833.6px;width:40px;text-align:right;color:#999">63</div><div class="cl" style="top:848.3px;width:40px;text-align:right;color:#999">64</div><div class="cl" style="top:863.1px;width:40px;text-align:right;color:#999">65</div></div>
<svg class="a" style="left:910.0px;top:265.2px" width="12" height="16" viewBox="0 0 12 16"><path d="M1 1v12l3-3 2.5 5 2-1-2.5-5h4z" fill="#111" stroke="#fff" stroke-width="1"/></svg>
<div class="a" style="left:284.0px;top:184.8px;width:8.8px;height:8.0px;background:#d9662c;border-radius:1px"></div>
<div class="a" style="left:284.0px;top:243.9px;width:8.8px;height:8.0px;background:#3a78d0;border-radius:1px"></div>
<div class="a" style="left:284.0px;top:376.7px;width:8.8px;height:8.0px;background:#4caa3c;border-radius:1px"></div>
<div class="a" style="left:284.0px;top:627.6px;width:8.8px;height:8.0px;background:#3a78d0;border-radius:1px"></div>
<div class="a" style="left:284.0px;top:775.2px;width:8.8px;height:8.0px;background:#3a78d0;border-radius:1px"></div>
<div class="a" style="left:326.0px;top:213.6px;width:9.6px;height:9.6px;border-radius:50%;background:#f5c12e;"></div>
<div class="a" style="left:250.0px;top:872.0px;width:958.0px;height:20.0px;background:#f6f6f6;"></div>
<div class="a" style="left:250.0px;top:872.0px;width:958.0px;height:0.8px;background:#e0e0e0;"></div>
<div class="a t" style="left:320.0px;top:876.6px;font-size:12.5px;color:#555;font-weight:normal;">MainActivity</div>
<div class="a t" style="left:412.0px;top:877.0px;font-size:12px;color:#888;font-weight:normal;">›</div>
<div class="a t" style="left:426.0px;top:876.6px;font-size:12.5px;color:#555;font-weight:normal;">onCreate()</div>
<div class="a" style="left:0.0px;top:892.0px;width:1238.4px;height:24.0px;background:#ececec;"></div>
<div class="a" style="left:0.0px;top:891.2px;width:1238.4px;height:0.8px;background:#d3d3d3;"></div>
<div class="a" style="left:10.0px;top:899.6px;width:8.4px;height:8.4px;background:#777;border-radius:1px"></div>
<div class="a t" style="left:22.0px;top:899.5px;font-size:11px;color:#333;font-weight:normal;">Terminal</div>
<div class="a" style="left:101.2px;top:899.6px;width:8.4px;height:8.4px;background:#5a9e4a;border-radius:1px"></div>
<div class="a t" style="left:113.2px;top:899.5px;font-size:11px;color:#333;font-weight:normal;">Build</div>
<div class="a" style="left:168.0px;top:899.6px;width:8.4px;height:8.4px;background:#777;border-radius:1px"></div>
<div class="a t" style="left:180.0px;top:899.5px;font-size:11px;color:#333;font-weight:normal;">6: Logcat</div>
<div class="a" style="left:262.8px;top:899.6px;width:8.4px;height:8.4px;background:#777;border-radius:1px"></div>
<div class="a t" style="left:274.8px;top:899.5px;font-size:11px;color:#333;font-weight:normal;">Android Profiler</div>
<div class="a" style="left:388.0px;top:899.6px;width:8.4px;height:8.4px;background:#2e9c3a;border-radius:1px"></div>
<div class="a t" style="left:400.0px;top:899.5px;font-size:11px;color:#333;font-weight:normal;">4: Run</div>
<div class="a" style="left:458.8px;top:899.6px;width:8.4px;height:8.4px;background:#d9a050;border-radius:1px"></div>
<div class="a t" style="left:470.8px;top:899.5px;font-size:11px;color:#333;font-weight:normal;">TODO</div>
<div class="a" style="left:1136.0px;top:899.2px;width:9.2px;height:9.2px;background:#e25a4a;border-radius:50%"></div>
<div class="a t" style="left:1148.8px;top:899.5px;font-size:11px;color:#333;font-weight:normal;">Event Log</div>
<div class="a" style="left:0.0px;top:916.0px;width:1238.4px;height:20.0px;background:#ececec;"></div>
<div class="a" style="left:0.0px;top:915.2px;width:1238.4px;height:0.8px;background:#dcdcdc;"></div>
<div class="a" style="left:4.0px;top:920.8px;width:8.0px;height:9.6px;background:#888;border-radius:0.5px"></div>
<div class="a t" style="left:16.0px;top:921.2px;font-size:10.85px;color:#333;font-weight:normal;">Emulator: Process finished with exit code 0 &nbsp; Emulator: emulator: WARNING: Internal mouse button tracking invalid (missing 1x left down) (2 minutes ago)</div>
<div class="a t" style="left:929.6px;top:920.8px;font-size:11.3px;color:#555;font-weight:normal;">14:16 &nbsp;&nbsp; LF ÷ &nbsp; UTF-8 ÷ &nbsp; Context: &lt;no context&gt;</div>
<div class="a" style="left:1198.0px;top:921.2px;width:8.0px;height:8.4px;background:#666;"></div>
<div class="a" style="left:1220.4px;top:921.2px;width:8.8px;height:8.8px;border-radius:50%;background:#999;"></div>
<!--phone-->
<div class="a" style="left:1556.4px;top:148.4px;width:56.8px;height:505.6px;background:#f4f4f4;box-shadow:0 0 2px rgba(0,0,0,0.3)"></div>
<svg class="a" style="left:1566.4px;top:157.6px" width="36" height="10" viewBox="0 0 36 10"><path d="M2 2l6 6M8 2l-6 6M26 5h7" stroke="#888" stroke-width="1.3"/></svg>
<svg class="a" style="left:1572.6px;top:184.6px" width="22" height="22" viewBox="0 0 16 16"><path d="M5 3.5A5.5 5.5 0 1 0 11 3.5" stroke="#3a3a3a" stroke-width="1.8" fill="none"/><path d="M8 1v6" stroke="#3a3a3a" stroke-width="1.8"/></svg>
<svg class="a" style="left:1572.6px;top:227.4px" width="22" height="22" viewBox="0 0 16 16"><path d="M1 5.5h3l4-3.5v12l-4-3.5H1z" fill="#3a3a3a"/><path d="M10 5q1.6 3 0 6M12 3.5q2.6 4.5 0 9" stroke="#3a3a3a" stroke-width="1.8" fill="none"/></svg>
<svg class="a" style="left:1572.6px;top:269.8px" width="22" height="22" viewBox="0 0 16 16"><path d="M3 5.5h3l4-3.5v12l-4-3.5H3z" fill="#3a3a3a"/><path d="M12 6q1.2 2 0 4" stroke="#3a3a3a" stroke-width="1.8" fill="none"/></svg>
<svg class="a" style="left:1572.6px;top:313.0px" width="22" height="22" viewBox="0 0 16 16"><path d="M8 2l6 6-6 6-6-6z" stroke="#3a3a3a" stroke-width="2.1" fill="none" transform="rotate(-15 8 8)"/><path d="M2 2l3 0 0 3" stroke="#3a3a3a" stroke-width="2" fill="none"/></svg>
<svg class="a" style="left:1572.6px;top:355.8px" width="22" height="22" viewBox="0 0 16 16"><path d="M8 2l6 6-6 6-6-6z" stroke="#3a3a3a" stroke-width="2.1" fill="none" transform="rotate(15 8 8)"/><path d="M14 2l-3 0 0 3" stroke="#3a3a3a" stroke-width="2" fill="none"/></svg>
<svg class="a" style="left:1572.6px;top:400.6px" width="22" height="22" viewBox="0 0 16 16"><rect x="1.5" y="4" width="13" height="9.5" rx="1.5" fill="#3a3a3a"/><rect x="5" y="2.5" width="6" height="2" fill="#3a3a3a"/><circle cx="8" cy="8.7" r="2.4" fill="#f3f3f3"/></svg>
<svg class="a" style="left:1572.6px;top:443.0px" width="22" height="22" viewBox="0 0 16 16"><circle cx="6.5" cy="6.5" r="4.3" stroke="#3a3a3a" stroke-width="2.1" fill="none"/><path d="M9.5 9.5l5 5" stroke="#3a3a3a" stroke-width="1.8"/></svg>
<svg class="a" style="left:1572.6px;top:489.0px" width="22" height="22" viewBox="0 0 16 16"><path d="M13 2L3 8l10 6z" stroke="#444" stroke-width="2" fill="none"/></svg>
<svg class="a" style="left:1572.6px;top:532.2px" width="22" height="22" viewBox="0 0 16 16"><circle cx="8" cy="8" r="5" stroke="#444" stroke-width="2" fill="none"/></svg>
<svg class="a" style="left:1572.6px;top:575.0px" width="22" height="22" viewBox="0 0 16 16"><rect x="3.5" y="2.5" width="9" height="11" stroke="#444" stroke-width="2" fill="none"/></svg>
<svg class="a" style="left:1572.6px;top:616.6px" width="22" height="22" viewBox="0 0 16 16"><circle cx="3" cy="8" r="1.3" fill="#3a3a3a"/><circle cx="8" cy="8" r="1.3" fill="#3a3a3a"/><circle cx="13" cy="8" r="1.3" fill="#3a3a3a"/></svg>
<div class="a" style="left:1206.0px;top:150.4px;width:336.0px;height:690.8px;border-radius:60.0px 60.0px 44.0px 44.0px;background:linear-gradient(90deg,#dedede,#efeff0 5%,#ededee 95%,#d8d8d8);border:3.0px solid #a0a0a0;box-shadow:0 0.5px 3px rgba(0,0,0,0.3)"></div>
<div class="a" style="left:1255.6px;top:170.4px;width:11.2px;height:11.2px;border-radius:50%;background:#333;"></div>
<div class="a" style="left:1338.4px;top:173.2px;width:68.8px;height:4.0px;background:#bbb;border-radius:3px"></div>
<div class="a" style="left:1360.8px;top:201.2px;width:23.2px;height:7.2px;background:#1a1a1a;border-radius:4px"></div>
<div class="a" style="left:1220.0px;top:215.2px;width:305.2px;height:512.8px;background:#fafafa;"></div>
<div class="a" style="left:1220.0px;top:232.8px;width:305.2px;height:44.0px;background:#3f51b5;box-shadow:0 0.8px 1.5px rgba(0,0,0,0.25)"></div>
<div class="a" style="left:1220.0px;top:215.2px;width:305.2px;height:18.8px;background:#3446a8;"></div>
<div class="a" style="left:1226.4px;top:221.2px;width:7.2px;height:7.2px;border-radius:50%;background:#e8e8e8;"></div>
<div class="a" style="left:1235.6px;top:221.2px;width:7.2px;height:7.2px;border-radius:50%;background:#c8c8e8;"></div>
<div class="a" style="left:1484.0px;top:220.0px;width:8.0px;height:10.0px;background:#eee;"></div>
<div class="a" style="left:1496.8px;top:220.0px;width:4.0px;height:10.0px;background:#eee;"></div>
<div class="a" style="left:1506.0px;top:222.0px;width:15.2px;height:6.0px;background:#ddd;"></div>
<div class="a" style="left:1231.2px;top:249.6px;width:15.2px;height:2.0px;background:#e8eaf6;"></div>
<div class="a" style="left:1231.2px;top:254.4px;width:15.2px;height:2.0px;background:#e8eaf6;"></div>
<div class="a" style="left:1231.2px;top:259.2px;width:15.2px;height:2.0px;background:#e8eaf6;"></div>
<div class="a t" style="left:1272.8px;top:248.5px;font-size:14.5px;color:#f4f5fb;font-weight:normal;letter-spacing:0.2px">My Application</div>
<div class="a" style="left:1509.2px;top:249.2px;width:2.4px;height:16.8px;background:#fff;"></div>
<div class="a t" style="left:1342.4px;top:497.8px;font-size:12px;color:#8a8a8a;font-weight:normal;">Hello World!</div>
<div class="a" style="left:1471.2px;top:672.4px;width:43.2px;height:43.2px;border-radius:50%;background:#ff1f7b;box-shadow:0 1px 3px rgba(0,0,0,0.35)"></div>
<div class="a" style="left:1483.6px;top:688.8px;width:18.4px;height:10.8px;background:#fff;border-radius:0.5px"></div>
<svg class="a" style="left:1483.6px;top:688.8px" width="18.4" height="10.8" viewBox="0 0 18.4 10.8"><path d="M0.5 0.5L9.2 6 17.9 0.5" stroke="#ff1f7b" stroke-width="1.8" fill="none"/></svg>
<div class="a" style="left:1220.0px;top:728.0px;width:305.2px;height:36.0px;background:#000;"></div>
<svg class="a" style="left:1220.0px;top:728.0px" width="305.2" height="36" viewBox="0 0 305 36"><path d="M71 12l-7 6 7 6" stroke="#bbb" stroke-width="2" fill="none"/><circle cx="153" cy="18" r="5" stroke="#bbb" stroke-width="2" fill="none"/><rect x="231" y="13" width="10" height="10" stroke="#bbb" stroke-width="2" fill="none"/></svg>
<div class="a" style="left:371.2px;top:936.0px;width:912.8px;height:97.2px;background:linear-gradient(180deg,rgba(140,165,195,0.5),rgba(130,160,195,0.55));"></div>
<svg class="a" style="left:384.0px;top:951.2px" width="68.0" height="64.8" viewBox="0 0 68 65"><rect x="0" y="0" width="68" height="65" rx="8" fill="#2f7fd8"/><rect x="34" y="0" width="34" height="65" fill="#d9dde2"/><rect x="0" y="52" width="34" height="13" fill="#1f5fb5"/><path d="M20 20v8M46 20v8M14 44q20 12 40 0" stroke="#222" stroke-width="3" fill="none"/></svg>
<svg class="a" style="left:467.6px;top:949.2px" width="70.4" height="70.4" viewBox="0 0 70 70"><circle cx="35" cy="35" r="34" fill="#8e969c"/><circle cx="35" cy="35" r="28" fill="#6d767d"/><path d="M22 50l10-22 18-6-8 18z" fill="#ddd"/></svg>
<svg class="a" style="left:558.8px;top:947.2px" width="66.0" height="70.0" viewBox="0 0 66 70"><g transform="rotate(-10 33 35)"><rect x="6" y="6" width="54" height="58" rx="3" fill="#f4f4f4"/><rect x="6" y="6" width="54" height="16" fill="#e8453c"/><text x="33" y="56" font-size="32" font-family="Liberation Sans" text-anchor="middle" fill="#333">21</text></g></svg>
<svg class="a" style="left:642.0px;top:953.2px" width="70.4" height="61.2" viewBox="0 0 70 61"><rect width="70" height="61" rx="5" fill="#1b1b1b" stroke="#777" stroke-width="1.5"/><rect x="2" y="2" width="66" height="6" fill="#444"/><path d="M10 16l8 5-8 5" stroke="#ddd" stroke-width="2.5" fill="none"/><path d="M20 28h8" stroke="#ddd" stroke-width="2.5"/></svg>
<svg class="a" style="left:744.0px;top:947.2px" width="56.8" height="71.2" viewBox="0 0 56 70"><path d="M40 1L56 9V61L40 69L9 42L2 48L0 46V24L2 22L9 28zM40 19L21 35L40 51z" fill="#2b8ae6"/><path d="M40 1L56 9V61L40 69z" fill="#1f6fc2"/></svg>
<svg class="a" style="left:812.0px;top:946.0px" width="71.2" height="71.2" viewBox="0 0 70 70"><circle cx="35" cy="35" r="33" fill="#ff9a2e"/><path d="M35 2a33 33 0 0 1 33 33 33 33 0 0 1-33 33 33 33 0 0 1-33-33q10 20 30 18 22-4 18-26-4-14-15-18z" fill="#ea5a2a"/><circle cx="37" cy="37" r="15" fill="#7b3fcf"/><path d="M5 55q20 18 50 8-30 4-50-8z" fill="#e01e7a"/></svg>
<svg class="a" style="left:899.2px;top:945.2px" width="74.8" height="74.8" viewBox="0 0 70 70"><circle cx="35" cy="35" r="34" fill="#2aa24a"/><path d="M35 1A34 34 0 0 1 64.4 18H35z M35 1A34 34 0 0 0 5.6 18L20 43z" fill="#e24236"/><path d="M64.4 18A34 34 0 0 1 35 69L50 43z" fill="#f6c02e"/><path d="M5.6 18L20 43 35 18z" fill="#e24236"/><circle cx="35" cy="35" r="15" fill="#fff"/><circle cx="35" cy="35" r="11.5" fill="#3a7de6"/></svg>
<svg class="a" style="left:990.8px;top:945.2px" width="70.8" height="70.8" viewBox="0 0 70 70"><circle cx="35" cy="35" r="33" fill="#5fae4a"/><circle cx="35" cy="35" r="26" fill="#3e8f3c"/><path d="M35 14l-18 44M35 14l18 44" stroke="#fff" stroke-width="5"/><circle cx="35" cy="18" r="6" fill="#eee"/><path d="M16 56h10M44 56h10" stroke="#fff" stroke-width="5"/></svg>
<svg class="a" style="left:1070.0px;top:945.2px" width="79.2" height="74.8" viewBox="0 0 78 74"><rect x="4" y="4" width="70" height="66" rx="8" fill="#5f9a38"/><rect x="26" y="14" width="26" height="52" rx="2" fill="#888"/></svg>
<svg class="a" style="left:1208.8px;top:943.2px" width="57.2" height="78.4" viewBox="0 0 56 77"><path d="M4 8h48l-4 66q-1 3-4 3H12q-3 0-4-3z" fill="#cfcfcf" fill-opacity="0.75"/><path d="M4 8h48" stroke="#bbb" stroke-width="3"/><path d="M16 14v56M28 14v56M40 14v56" stroke="#c8c8c8" stroke-width="2"/></svg>
<div class="a" style="left:416.6px;top:1028.6px;width:2.8px;height:2.8px;border-radius:50%;background:#222;"></div>
<div class="a" style="left:677.0px;top:1028.6px;width:2.8px;height:2.8px;border-radius:50%;background:#222;"></div>
<div class="a" style="left:925.4px;top:1028.6px;width:2.8px;height:2.8px;border-radius:50%;background:#222;"></div>
<div class="a" style="left:1026.6px;top:1028.6px;width:2.8px;height:2.8px;border-radius:50%;background:#222;"></div>
<div class="a" style="left:1108.2px;top:1028.6px;width:2.8px;height:2.8px;border-radius:50%;background:#222;"></div>
<div class="a" style="left:20.8px;top:922.8px;width:144.0px;height:89.6px;background:rgba(23,35,34,0.8);border-radius:8px"></div>
<div class="a" style="left:72.8px;top:946.8px;width:15.6px;height:45.2px;background:#fff;"></div>
<div class="a" style="left:100.0px;top:946.8px;width:16.4px;height:45.2px;background:#fff;"></div>
<div class="a" style="left:188.0px;top:943.6px;width:1444.0px;height:68.8px;background:rgba(23,35,34,0.6);border-radius:4px"></div>
<div class="a" style="left:209.2px;top:966.8px;width:1162.8px;height:23.6px;background:linear-gradient(90deg,rgba(140,140,140,0.85) 0%,rgba(140,140,140,0.75) 45%,rgba(140,140,140,0.4) 70%,rgba(140,140,140,0.0) 85%);border:2px solid rgba(150,150,150,0.75)"></div>
<div class="a" style="left:210.4px;top:968.0px;width:15.2px;height:21.2px;background:#19d38a;"></div>
<div class="a" style="left:179.2px;top:922.8px;width:86.0px;height:36.8px;background:#fff;border-radius:1px"></div>
<div class="a" style="left:210.4px;top:959.2px;width:0;height:0;border-left:8.0px solid transparent;border-right:8.0px solid transparent;border-top:7.2px solid #fff"></div>
<div class="a t" style="left:190.0px;top:929.6px;font-size:26.5px;color:#333;font-weight:normal;letter-spacing:0px">00:01</div>
<div class="a" style="left:1392.8px;top:983.2px;width:7.6px;height:8.8px;background:#19d38a;"></div>
<div class="a" style="left:1403.8px;top:978.2px;width:7.6px;height:13.8px;background:#19d38a;"></div>
<div class="a" style="left:1414.8px;top:973.2px;width:7.6px;height:18.8px;background:#19d38a;"></div>
<div class="a" style="left:1425.8px;top:968.2px;width:7.6px;height:23.8px;background:#19d38a;"></div>
<div class="a" style="left:1436.8px;top:963.2px;width:7.6px;height:28.8px;background:#19d38a;"></div>
<svg class="a" style="left:1471.2px;top:960.8px" width="34" height="34" viewBox="0 0 34 34"><g fill="#fff"><circle cx="17" cy="17" r="10"/><rect x="12.5" y="1.0" width="9" height="9" transform="rotate(0 17 17)"/><rect x="12.5" y="1.0" width="9" height="9" transform="rotate(60 17 17)"/><rect x="12.5" y="1.0" width="9" height="9" transform="rotate(120 17 17)"/><rect x="12.5" y="1.0" width="9" height="9" transform="rotate(180 17 17)"/><rect x="12.5" y="1.0" width="9" height="9" transform="rotate(240 17 17)"/><rect x="12.5" y="1.0" width="9" height="9" transform="rotate(300 17 17)"/></g><circle cx="17" cy="17" r="4.6" fill="#2b3433"/></svg>
<div class="a" style="left:1524.8px;top:963.6px;width:34.0px;height:21.2px;background:none;border:3.2px solid #fff"></div>
<div class="a" style="left:1542.0px;top:979.2px;width:22.4px;height:12.0px;background:#fff;"></div>
<svg class="a" style="left:1584.0px;top:964.0px" width="30" height="28" viewBox="0 0 30 28"><g fill="#fff"><path d="M0 0h9v3H3v6H0z"/><path d="M30 0h-9v3h6v6h3z"/><path d="M0 28h9v-3H3v-6H0z"/><path d="M30 28h-9v-3h6v-6h3z"/><path d="M4 4l8 8M26 4l-8 8M4 24l8-8M26 24l-8-8" stroke="#fff" stroke-width="3"/></g></svg></div></div><div class="a t" style="left:230.00px;top:364.52px;font-size:8.25px;color:#4a4a4a;font-weight:normal;">Wie bereits erwähnt, kannst du Android Projekte einfach auf deinem Rechner über einen <i style="color:#22b98a">Emulator</i> starten und</div>
<div class="a t" style="left:230.00px;top:380.22px;font-size:8.25px;color:#4a4a4a;font-weight:normal;">ausführen. Du hast auch Zugriff auf ein paar native Funktionen, wie GPS, Kamera oder Gyroskop. Dazu kannst</div>

</div>
</body></html>
